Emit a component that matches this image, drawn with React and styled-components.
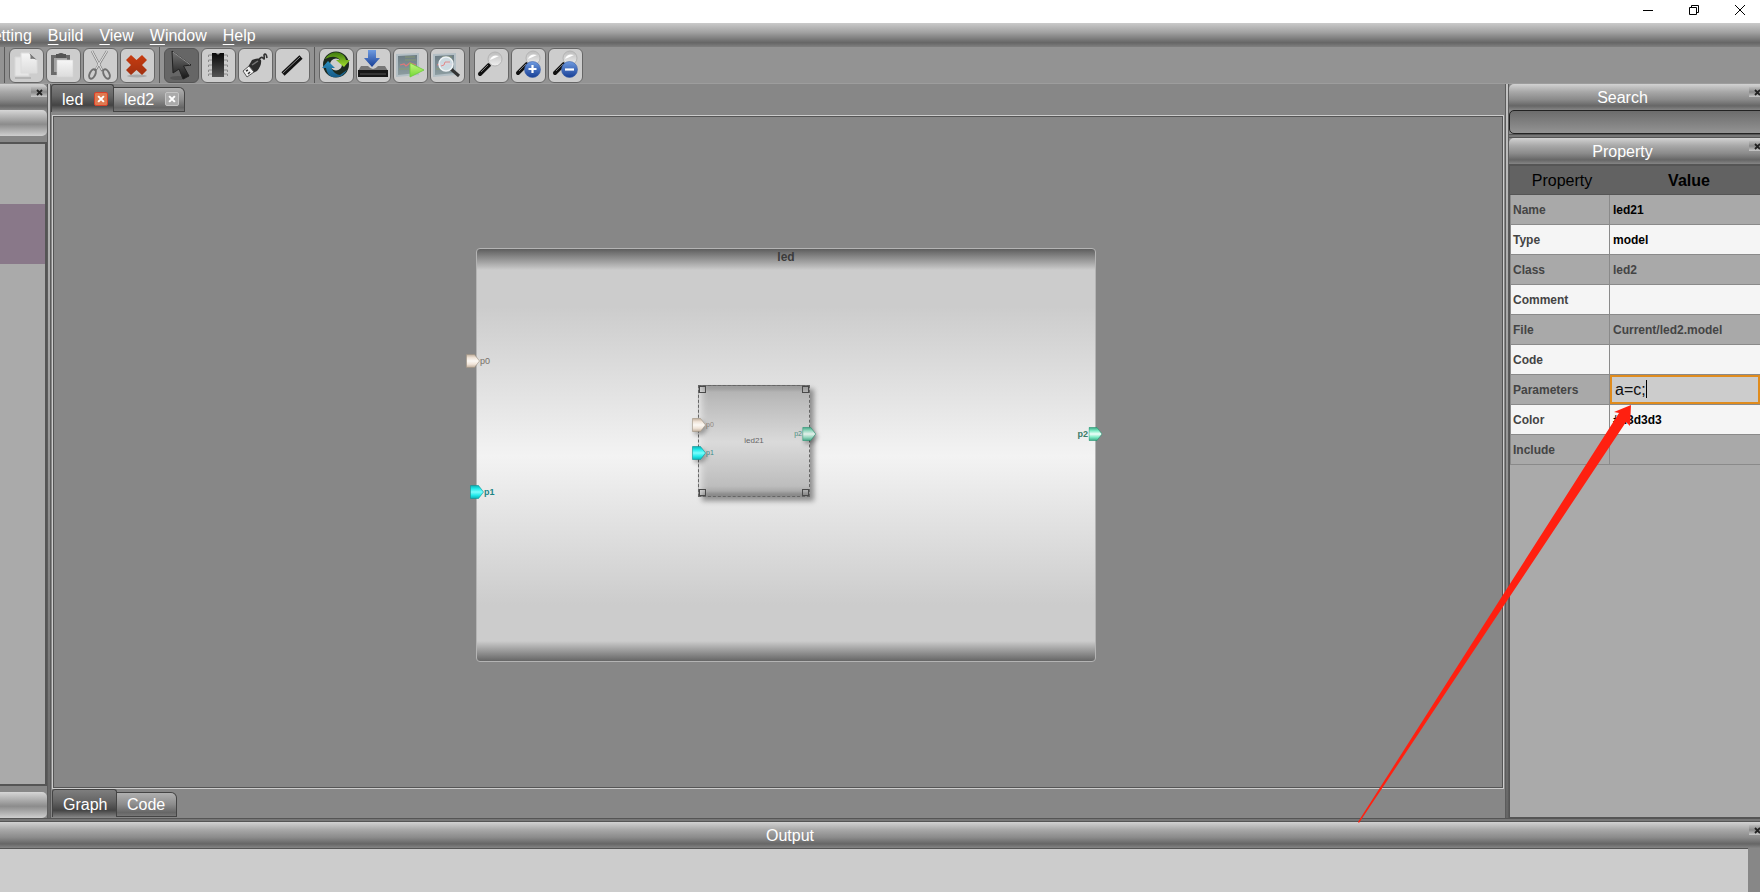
import React from "react";
import styled, { createGlobalStyle, css } from "styled-components";

const Global = createGlobalStyle`
  *, *::before, *::after { box-sizing: border-box; }
  html, body, #root { margin: 0; height: 100%; }
  body { font-family: "Liberation Sans", Arial, sans-serif; font-size: 16px; line-height: 20px; background: #878787; overflow: hidden; }
  button, input { font: inherit; margin: 0; padding: 0; border: 0; background: none; color: inherit; }
`;

const barGradient = "linear-gradient(#d2d2d2 0%, #a8a8a8 30%, #8a8a8a 60%, #666 84%, #858585 100%)";

const Shell = styled.div`
  position: relative;
  display: flex;
  flex-direction: column;
  height: 100vh;
  overflow: hidden;
  background: #878787;
`;

const TitleBar = styled.header`
  display: flex;
  justify-content: flex-end;
  flex: none;
  height: 23px;
  background: #fff;
`;

const WindowButton = styled.button`
  display: flex;
  align-items: center;
  justify-content: center;
  width: 46px;
  height: 20px;
  svg { display: block; }
`;

const WindowButtons = styled.div`
  display: flex;
  margin-right: -3px;
`;

const MenuBar = styled.nav`
  display: flex;
  align-items: center;
  flex: none;
  gap: 16px;
  height: 24px;
  padding-top: 2px;
  margin-left: -18px;
  background: linear-gradient(#cacaca 0%, #a0a0a0 40%, #666 82%, #808080 100%);
`;

const MenuItem = styled.button`
  height: 22px;
  color: #fff;
  white-space: nowrap;
  u { text-underline-offset: 3px; text-decoration-thickness: 1px; }
`;

const Toolbar = styled.div`
  display: flex;
  align-items: center;
  flex: none;
  gap: 4px;
  height: 37px;
  padding-left: 4px;
  background: #939393;
  border-bottom: 1px solid #9d9d9d;
`;

const ToolGroup = styled.div`
  display: flex;
  gap: 2px;
`;

const ToolSeparator = styled.div`
  width: 1px;
  height: 36px;
  background: #5a5a5a;
`;

const ToolButton = styled.button`
  width: 35px;
  height: 35px;
  border: 1px solid #666;
  border-radius: 6px;
  background: ${(p) => (p.$active ? "#666" : "#cdcdcd")};
  ${(p) => p.$active && css`border-color: #555;`}
  svg { display: block; }
`;

const Workspace = styled.div`
  display: flex;
  flex: 1;
  min-height: 0;
`;

const LeftDock = styled.aside`
  display: flex;
  flex-direction: column;
  flex: none;
  width: 47px;
`;

const RightDock = styled.aside`
  display: flex;
  flex-direction: column;
  flex: none;
  width: 251px;
`;

const DockTitle = styled.div`
  display: flex;
  align-items: center;
  flex: none;
  position: relative;
  height: 26px;
  padding-top: 2px;
  padding-right: ${(p) => p.$pad || 0}px;
  justify-content: center;
  color: #fff;
  background: ${barGradient};
  border-radius: ${(p) => p.$radius || "0"};
`;

const DockClose = styled.button`
  position: absolute;
  top: 3px;
  right: ${(p) => (p.$clipped ? "-5px" : "0")};
  display: flex;
  align-items: center;
  justify-content: center;
  width: 16px;
  height: 10px;
  background: linear-gradient(#bbb, #888 50%, #c8c8c8);
`;

const SilverBar = styled.div`
  flex: none;
  height: 26px;
  border-radius: 0 5px 5px 0;
  background: linear-gradient(#d6d6d6 0%, #959595 48%, #8c8c8c 55%, #cfcfcf 100%);
`;

const TreeFrame = styled.div`
  flex: 1;
  margin: 6px 0;
  padding-top: 60px;
  border: solid #555;
  border-width: 2px 2px 2px 0;
  background: #aaa;
`;

const TreeSelection = styled.div`
  height: 60px;
  background: #897889;
`;

const VSplitter = styled.div`
  flex: none;
  width: 4px;
  border: solid #5c5c5c;
  border-width: 0 1px;
  background: linear-gradient(#c4c4c4, #666);
`;

const HSplitter = styled.div`
  flex: none;
  height: 4px;
  border: solid #555;
  border-width: 1px 0;
  background: #777;
`;

const Center = styled.main`
  display: flex;
  flex-direction: column;
  flex: 1;
  min-width: 0;
`;

const TabBar = styled.div`
  display: flex;
  align-items: flex-start;
  flex: none;
  height: ${(p) => (p.$bottom ? 29 : 31)}px;
  padding-left: ${(p) => (p.$bottom ? 1 : 0)}px;
`;

const Tab = styled.div`
  display: flex;
  align-items: center;
  justify-content: space-between;
  width: ${(p) => p.$width}px;
  height: ${(p) => (p.$active ? 28 : 25)}px;
  margin-top: ${(p) => (p.$active ? 0 : 3)}px;
  padding: ${(p) => (p.$active ? "2px" : "0")} 5px 0 10px;
  color: #fff;
  border: 1px solid #444;
  border-left-width: ${(p) => (p.$active ? 1 : 0)}px;
  border-bottom-width: ${(p) => (p.$active ? 0 : 1)}px;
  border-radius: ${(p) => (p.$active ? "3px 3px 0 0" : "0 6px 0 0")};
  background: ${(p) =>
    p.$active
      ? "linear-gradient(#7e7e7e 0%, #666 40%, #444 75%, #808080 100%)"
      : "linear-gradient(#b0b0b0 0%, #8c8c8c 50%, #666 85%, #777 100%)"};
`;

const TabLabel = styled.button`
  height: 20px;
`;

const TabClose = styled.button`
  display: flex;
  align-items: center;
  justify-content: center;
  width: 14px;
  height: 14px;
  margin-bottom: 2px;
  border: 1px solid ${(p) => (p.$hot ? "#d8402a" : "#c4c4c4")};
  border-radius: 2px;
  background: ${(p) => (p.$hot ? "#df7a50" : "#aaa")};
`;

const Canvas = styled.div`
  flex: 1;
  min-height: 0;
  margin: 0 1px;
  border: 1px solid #ccc;
`;

const Scene = styled.div`
  position: relative;
  height: 100%;
  overflow: hidden;
  border: 1px solid #555;
  background: #878787;
`;

const ModelNode = styled.div`
  position: absolute;
  left: 422px;
  top: 131px;
  width: 620px;
  height: 414px;
  border: 1px solid #b4b4b4;
  border-radius: 4px;
  color: #3c3c3c;
  font-size: 12px;
  font-weight: bold;
  line-height: 16px;
  text-align: center;
  background: linear-gradient(#5e5e5e 0, #ccc 21px, #ccc 58px, #f3f3f3 207px, #ccc 356px, #ccc 392px, #666 412px);
`;

const InstanceNode = styled.div`
  position: absolute;
  left: 644px;
  top: 268px;
  display: flex;
  align-items: center;
  justify-content: center;
  width: 112px;
  height: 112px;
  border: 1px dashed #666;
  color: #666;
  font-size: 8px;
  background: linear-gradient(#8a8a8a 0, #b4b4b4 6px, #bdbdbd 16px, #dadada 56px, #bdbdbd 100px, #aaa 105px, #707070 110px);
  box-shadow: 4px 4px 5px rgba(0, 0, 0, 0.38), inset 5px 0 6px -2px rgba(235, 235, 235, 0.8);
`;

const Handle = styled.span`
  position: absolute;
  width: 7px;
  height: 7px;
  border: 1px solid #4a4a4a;
  ${(p) => p.$v}: 0;
  ${(p) => p.$h}: 0;
`;

const Port = styled.div`
  position: absolute;
  left: ${(p) => p.$x}px;
  top: ${(p) => p.$y}px;
  display: flex;
  flex-direction: ${(p) => (p.$out ? "row-reverse" : "row")};
  align-items: center;
  transform: ${(p) => (p.$out ? "translateX(-100%)" : "none")};
  color: ${(p) => p.$color};
  font-size: ${(p) => (p.$small ? 7 : 9)}px;
  font-weight: ${(p) => (p.$bold ? "bold" : "normal")};
  line-height: 14px;
  svg { display: block; filter: ${(p) => (p.$small ? "drop-shadow(2px 3px 2px rgba(0,0,0,.3))" : "none")}; }
`;

const SearchInput = styled.input`
  flex: none;
  width: calc(100% + 6px);
  height: 24px;
  padding: 0 6px;
  border: 1px solid #222;
  border-radius: 5px;
  color: #fff;
  background: linear-gradient(#6c6c6c, #939393);
  outline: none;
`;

const PropertyFrame = styled.div`
  flex: 1;
  border: solid #555;
  border-width: 2px 0 1px 1px;
  background: #aaa;
`;

const PropertyTable = styled.table`
  width: 100%;
  table-layout: fixed;
  border-collapse: separate;
  border-spacing: 0;
  font-size: 12px;
`;

const HeadCell = styled.th`
  width: ${(p) => (p.$first ? "100px" : "auto")};
  height: 29px;
  padding: 2px 0 0 ${(p) => (p.$first ? "4px" : "8px")};
  border-bottom: 1px solid #555;
  font-size: 16px;
  font-weight: ${(p) => (p.$first ? "normal" : "bold")};
  color: #000;
  background: #626262;
`;

const PropRow = styled.tr`
  background: ${(p) => (p.$light ? "#f5f5f5" : "#a9a9a9")};
`;

const NameCell = styled.th`
  height: 30px;
  padding: 0 2px;
  text-align: left;
  color: #444;
  border: solid #8a8a8a;
  border-width: 0 1px 1px 1px;
`;

const ValueCell = styled.td`
  height: 30px;
  padding: ${(p) => (p.$editing ? "0" : "0 3px")};
  font-weight: bold;
  color: ${(p) => (p.$strong ? "#000" : "#444")};
  border-bottom: 1px solid #8a8a8a;
`;

const Editor = styled.div`
  position: relative;
  height: 29px;
  &::after {
    content: "";
    position: absolute;
    left: 36px;
    top: 5px;
    width: 1px;
    height: 18px;
    background: #000;
  }
`;

const EditorInput = styled.input`
  display: block;
  width: 100%;
  height: 29px;
  padding: 0 3px;
  border: 2px solid #e08c1e;
  color: #111;
  font-size: 16px;
  font-weight: normal;
  background: #ccc;
  outline: none;
`;

const OutputDock = styled.section`
  display: flex;
  flex-direction: column;
  flex: none;
  height: 70px;
`;

const OutputBody = styled.div`
  flex: 1;
  margin-right: 12px;
  border-top: 1px solid #555;
  background: #ccc;
`;

const Annotation = styled.svg`
  position: absolute;
  right: 128px;
  top: 405px;
  pointer-events: none;
`;

const CloseGlyph = ({ color = "#222", size = 7 }) => (
  <svg width={size} height={size} viewBox="0 0 7 7">
    <path d="M1 1L6 6M6 1L1 6" stroke={color} strokeWidth="1.8" />
  </svg>
);

const Icon = ({ children }) => (
  <svg width="33" height="33" viewBox="1 1 33 33" fill="none">{children}</svg>
);

const Magnifier = ({ x = 20, y = 11, badge }) => (
  <>
    <path d={`M${x - 6} ${y + 6}L${x - 15} ${y + 15}`} stroke="#111" strokeWidth="4" strokeLinecap="round" />
    <path d={`M${x - 7} ${y + 6}L${x - 14} ${y + 13}`} stroke="#777" strokeWidth="1" />
    <circle cx={x} cy={y} r="7" fill="url(#lens)" stroke="#b4b4b4" />
    <path d={`M${x - 5} ${y + 1}Q${x - 3} ${y - 5} ${x + 4} ${y - 3}Q${x} ${y - 1} ${x - 5} ${y + 1}`} fill="#fff" />
    {badge && (
      <>
        <circle cx="21.5" cy="21.5" r="8" fill="url(#badge)" stroke="#3e62a8" strokeWidth=".6" />
        <path d={badge === "plus" ? "M17.5 21H25.5M21.5 17V25" : "M17 21.5H26"} stroke="#fff" strokeWidth="2.2" />
      </>
    )}
  </>
);

const Board = () => (
  <>
    <path d="M3 6L26 5V27L3 29Z" fill="#b3bfc5" />
    <path d="M5 8L24 7V25L5 27Z" fill="url(#board)" />
    <path d="M12 12H23M6 21H22M12 9H22" stroke="#8ea06c" strokeWidth=".8" />
    <path d="M7 17L11 16 13 18 17 15 23 17" stroke="#e07878" strokeWidth="1.2" />
  </>
);

const icons = {
  copy: (
    <Icon>
      <path d="M6 30H22" stroke="#b4b4b4" strokeWidth="2" />
      <path d="M6 9H20V28H6Z" fill="#e6e6e6" stroke="#d8d8d8" />
      <path d="M12 5H21L28 12V25H12Z" fill="url(#paper)" stroke="#dcdcdc" />
      <path d="M20.5 5L28 12Q24 10 21.5 11Q22 8 20.5 5Z" fill="#777" />
    </Icon>
  ),
  paste: (
    <Icon>
      <path d="M5 7H24V13H11V27H5Z" fill="#6a6a6a" />
      <path d="M8 10H21V13H11V24H8Z" fill="#a4a4a4" />
      <path d="M10 6H12Q15 4 18 6H20V10H10Z" fill="#555" />
      <path d="M11 12H27V29H11Z" fill="url(#paper)" stroke="#d4d4d4" strokeWidth=".6" />
    </Icon>
  ),
  cut: (
    <Icon>
      <path d="M9 3L19.5 23M24 3L12 23" stroke="#777" strokeWidth="2.4" />
      <path d="M9 3L19 22M24 3L13 21" stroke="#ddd" strokeWidth="1.2" />
      <ellipse cx="9.5" cy="26" rx="2.8" ry="5" transform="rotate(25 9.5 26)" stroke="#707070" strokeWidth="2" />
      <ellipse cx="23.5" cy="26" rx="2.8" ry="5" transform="rotate(-25 23.5 26)" stroke="#707070" strokeWidth="2" />
    </Icon>
  ),
  remove: (
    <Icon>
      <ellipse cx="17" cy="28" rx="10" ry="1.5" fill="#aaa" />
      <path d="M11 7L16.500 12L22 7L27 12L22 17L27 22L22 27L16.500 22L11 27L6 22L11 17L6 12Z" fill="url(#cross)" />
    </Icon>
  ),
  select: (
    <Icon>
      <ellipse cx="14" cy="30" rx="8" ry="2" fill="#555" />
      <path d="M8 3L27 17L19.500 18L25 28L19 31L15 21L9 25Z" fill="url(#pointer)" stroke="#222" strokeWidth="1" />
      <path d="M9 4L26 16.5" stroke="#aaa" strokeWidth=".8" />
    </Icon>
  ),
  chip: (
    <Icon>
      {[7, 12, 17, 22, 26].map((y) => (
        <path key={y} d={`M11 ${y}H7.500V${y + 2}M23 ${y}H26.500V${y + 2}`} stroke="#8c8c8c" strokeWidth="1" />
      ))}
      <path d="M11 5H23V29H11Z" fill="url(#chip)" />
      <path d="M15 5Q17 8 19 5Z" fill="#999" />
    </Icon>
  ),
  plug: (
    <Icon>
      <path d="M20 13Q23 8 25 10Q27 13 26 7Q28 4 29 10" stroke="#333" strokeWidth="1.6" />
      <path d="M10 19L14 12Q21 9 23 12Q24 17 19 23L15 25Z" fill="#2c2c2c" />
      <path d="M14 17L20 13" stroke="#777" strokeWidth="1.5" />
      <path d="M5 23L11 18L16 24L9 29Z" fill="#f0f0f0" stroke="#555" />
      <path d="M8 23L10 22M10 26L12 24" stroke="#333" strokeWidth="1.5" />
    </Icon>
  ),
  wire: (
    <Icon>
      <path d="M8 26L26 9" stroke="#111" strokeWidth="4.6" />
      <path d="M8 25L25 9" stroke="#888" strokeWidth="1" />
    </Icon>
  ),
  refresh: (
    <Icon>
      <circle cx="17" cy="16.5" r="9.5" stroke="#1c2a20" strokeWidth="7" />
      <path d="M6 11Q12 2 21 5Q26 7 27 12L31 12L25 19L17 12L21 12Q16 6 6 11Z" fill="url(#green)" />
      <path d="M28 22Q23 31 13 29Q8 27 7 20L3 20L9 13L16 20L12 20Q16 27 21 27Z" fill="url(#blue)" />
    </Icon>
  ),
  download: (
    <Icon>
      <path d="M5 18H12Q17 24 22 18H29L32 23H2Z" fill="#777" />
      <path d="M2 22H32V29H2Z" fill="#181818" />
      <path d="M4 26H30" stroke="#555" />
      <path d="M12 2H20V10H24L16 19L8 10H12Z" fill="url(#badge)" />
    </Icon>
  ),
  run: (
    <Icon>
      <Board />
      <path d="M17 15L31 22L17 29Z" fill="url(#play)" stroke="#6ccc3a" strokeWidth=".8" />
    </Icon>
  ),
  inspect: (
    <Icon>
      <Board />
      <path d="M21 21L29 28" stroke="#333" strokeWidth="3" />
      <circle cx="16" cy="16" r="7" fill="#d9e8f0" fillOpacity=".85" stroke="#eef3f6" strokeWidth="1.5" />
      <path d="M11 18L14 17 15 14 20 14" stroke="#e08a8a" strokeWidth="1" />
    </Icon>
  ),
  zoom: <Icon><Magnifier x={21} y={11} /></Icon>,
  zoomIn: <Icon><Magnifier x={22} y={10} badge="plus" /></Icon>,
  zoomOut: <Icon><Magnifier x={22} y={10} badge="minus" /></Icon>,
};

const toolGroups = [
  [["copy", "Copy"], ["paste", "Paste"], ["cut", "Cut"], ["remove", "Delete"]],
  [["select", "Select"], ["chip", "Model"], ["plug", "Port"], ["wire", "Connect"]],
  [["refresh", "Refresh"], ["download", "Export"], ["run", "Run"], ["inspect", "Inspect"]],
  [["zoom", "Zoom reset"], ["zoomIn", "Zoom in"], ["zoomOut", "Zoom out"]],
];

const stops = {
  lens: ["#bbb", "#f0f0f0"],
  badge: ["#6f9be0", "#173f96"],
  paper: ["#f6f6f6", "#dcdcdc"],
  cross: ["#c83c10", "#a03010"],
  pointer: ["#777", "#161616"],
  chip: ["#080808", "#555"],
  green: ["#3f7a10", "#a2e02c"],
  blue: ["#2a8fc0", "#155a86"],
  board: ["#6c7c84", "#8c9ca0"],
  play: ["#c4f57c", "#74d838"],
  portCream: ["#c0ae9c", "#f0e4d8", "#fbf8f4", "#f0e4d8", "#c0ae9c"],
  portCyan: ["#0cb0b4", "#20ecec", "#7cfcfc", "#20ecec", "#0cb0b4"],
  portMint: ["#3ca884", "#7cecc4", "#f0fffa", "#7cecc4", "#3ca884"],
  portMintSoft: ["#48a888", "#98d8c0", "#e4f0ea", "#98d8c0", "#48a888"],
};

const Gradients = () => (
  <svg width="0" height="0" style={{ position: "absolute" }} aria-hidden="true">
    <defs>
      {Object.entries(stops).map(([id, colors]) => (
        <linearGradient key={id} id={id} x1="0" y1="0" x2="0" y2="1">
          {colors.map((c, i) => (
            <stop key={i} offset={i / (colors.length - 1)} stopColor={c} />
          ))}
        </linearGradient>
      ))}
    </defs>
  </svg>
);

const PortShape = ({ fill, edge }) => (
  <svg width="14" height="14" viewBox="0 0 14 14">
    <path d="M.5 .5H8.500L13.500 7L8.500 13.500H.5Z" fill={`url(#${fill})`} stroke={edge} strokeOpacity=".6" strokeWidth="1" />
  </svg>
);

const ports = [
  { name: "p0", x: 412, y: 237, fill: "portCream", edge: "#a09484", color: "#777068" },
  { name: "p1", x: 416, y: 368, fill: "portCyan", edge: "#0c9496", color: "#1c8484", bold: true },
  { name: "p2", x: 1048, y: 310, fill: "portMint", edge: "#2c9674", color: "#3c7c68", bold: true, out: true },
  { name: "p0", x: 638, y: 301, fill: "portCream", edge: "#a09484", color: "#908880", small: true },
  { name: "p1", x: 638, y: 329, fill: "portCyan", edge: "#0c9496", color: "#3c8c8c", small: true },
  { name: "p2", x: 762, y: 310, fill: "portMintSoft", edge: "#2c9674", color: "#4c9080", small: true, out: true },
];

const properties = [
  ["Name", "led21", true],
  ["Type", "model", true],
  ["Class", "led2"],
  ["Comment", ""],
  ["File", "Current/led2.model"],
  ["Code", ""],
  ["Parameters", "a=c;"],
  ["Color", "#d3d3d3", true],
  ["Include", ""],
];

export default function App() {
  return (
    <Shell>
      <Global />
      <Gradients />
      <TitleBar>
        <WindowButtons>
          <WindowButton aria-label="Minimize">
            <svg width="10" height="10"><path d="M0 5.500H10" stroke="#000" /></svg>
          </WindowButton>
          <WindowButton aria-label="Restore">
            <svg width="10" height="10" fill="none" stroke="#000"><path d="M.5 2.500H7.500V9.500H.5ZM2.500 2.500V.5H9.500V7.500H7.500" /></svg>
          </WindowButton>
          <WindowButton aria-label="Close">
            <svg width="10" height="10" stroke="#000"><path d="M0 0L10 10M10 0L0 10" /></svg>
          </WindowButton>
        </WindowButtons>
      </TitleBar>

      <MenuBar>
        <MenuItem><u>S</u>etting</MenuItem>
        <MenuItem><u>B</u>uild</MenuItem>
        <MenuItem><u>V</u>iew</MenuItem>
        <MenuItem><u>W</u>indow</MenuItem>
        <MenuItem><u>H</u>elp</MenuItem>
      </MenuBar>

      <Toolbar>
        {toolGroups.map((group, i) => (
          <React.Fragment key={i}>
            <ToolSeparator />
            <ToolGroup>
              {group.map(([id, label]) => (
                <ToolButton key={id} aria-label={label} $active={id === "select"}>{icons[id]}</ToolButton>
              ))}
            </ToolGroup>
          </React.Fragment>
        ))}
      </Toolbar>

      <Workspace>
        <LeftDock>
          <DockTitle $radius="0 5px 0 0">
            <DockClose aria-label="Close panel"><CloseGlyph /></DockClose>
          </DockTitle>
          <SilverBar />
          <TreeFrame><TreeSelection /></TreeFrame>
          <SilverBar />
        </LeftDock>
        <VSplitter />

        <Center>
          <TabBar>
            <Tab $active $width={63}>
              <TabLabel>led</TabLabel>
              <TabClose $hot aria-label="Close led"><CloseGlyph color="#fff" size={8} /></TabClose>
            </Tab>
            <Tab $width={71}>
              <TabLabel>led2</TabLabel>
              <TabClose aria-label="Close led2"><CloseGlyph color="#fff" size={8} /></TabClose>
            </Tab>
          </TabBar>
          <Canvas>
            <Scene>
              <ModelNode>led</ModelNode>
              <InstanceNode>
                led21
                <Handle $v="top" $h="left" />
                <Handle $v="top" $h="right" />
                <Handle $v="bottom" $h="left" />
                <Handle $v="bottom" $h="right" />
              </InstanceNode>
              {ports.map((p, i) => (
                <Port key={i} $x={p.x} $y={p.y} $color={p.color} $small={p.small} $bold={p.bold} $out={p.out}>
                  <PortShape fill={p.fill} edge={p.edge} />
                  {p.name}
                </Port>
              ))}
            </Scene>
          </Canvas>
          <TabBar $bottom>
            <Tab $active $width={65}><TabLabel>Graph</TabLabel></Tab>
            <Tab $width={60}><TabLabel>Code</TabLabel></Tab>
          </TabBar>
        </Center>

        <VSplitter />
        <RightDock>
          <DockTitle $pad={24} $radius="5px 0 0 0">
            Search
            <DockClose $clipped aria-label="Close search"><CloseGlyph /></DockClose>
          </DockTitle>
          <SearchInput aria-label="Search" />
          <HSplitter />
          <DockTitle $pad={24} $radius="5px 0 0 0">
            Property
            <DockClose $clipped aria-label="Close property"><CloseGlyph /></DockClose>
          </DockTitle>
          <PropertyFrame>
            <PropertyTable>
              <thead>
                <tr>
                  <HeadCell $first>Property</HeadCell>
                  <HeadCell>Value</HeadCell>
                </tr>
              </thead>
              <tbody>
                {properties.map(([name, value, strong], i) => (
                  <PropRow key={name} $light={i % 2 === 1}>
                    <NameCell scope="row">{name}</NameCell>
                    <ValueCell $strong={strong} $editing={name === "Parameters"}>
                      {name === "Parameters" ? (
                        <Editor><EditorInput aria-label="Parameters" defaultValue={value} /></Editor>
                      ) : value}
                    </ValueCell>
                  </PropRow>
                ))}
              </tbody>
            </PropertyTable>
          </PropertyFrame>
        </RightDock>
      </Workspace>

      <HSplitter />
      <OutputDock>
        <DockTitle $pad={180}>
          Output
          <DockClose $clipped aria-label="Close output"><CloseGlyph /></DockClose>
        </DockTitle>
        <OutputBody />
      </OutputDock>

      <Annotation width="274" height="418" viewBox="0 0 274 418" aria-hidden="true">
        <path d="M273 0L256 7L261 8L0 417L1 418L268 17L272 21Z" fill="#ff2010" />
      </Annotation>
    </Shell>
  );
}
